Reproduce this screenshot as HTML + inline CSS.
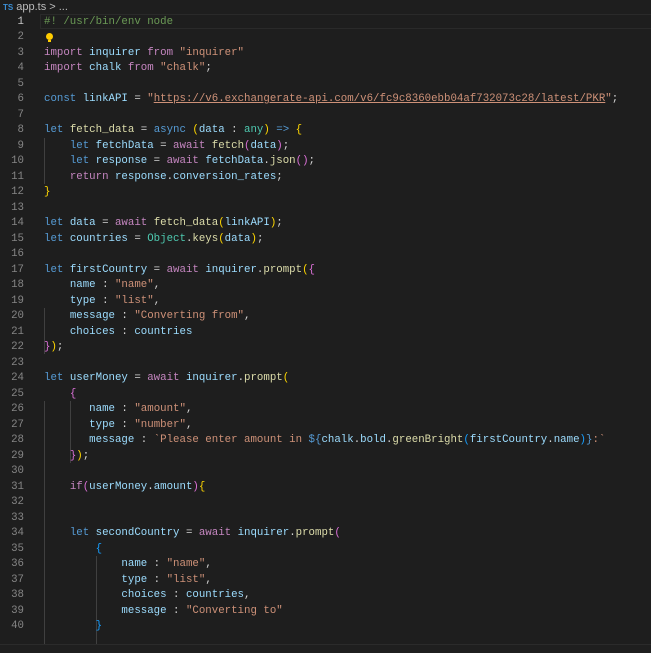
<!DOCTYPE html>
<html><head><meta charset="utf-8"><style>
html,body{margin:0;padding:0;background:#1e1e1e;width:651px;height:653px;overflow:hidden;position:relative}
.bc{position:absolute;left:3px;top:0;height:14px;font:11px "Liberation Sans",sans-serif;color:#bbbbbb;line-height:14px;white-space:pre}
.bc .ts{color:#3b8fd6;font-size:8px;font-weight:bold;margin-right:3px}
.cur{position:absolute;left:40px;right:0;top:14px;height:15px;border:1px solid #2a2a2a;border-right:none;box-sizing:border-box}
.ln{position:absolute;left:0;width:24px;top:14.5px;text-align:right;font:10.75px/15.5px "Liberation Mono",monospace;color:#858585;white-space:pre}
.code{position:absolute;left:44px;top:14.5px;font:10.75px/15.5px "Liberation Mono",monospace;color:#d4d4d4;white-space:pre}
.k{color:#569cd6}.c{color:#c586c0}.v{color:#9cdcfe}.f{color:#dcdcaa}.s{color:#ce9178}.m{color:#6a9955}.t{color:#4ec9b0}
.b1{color:#ffd700}.b2{color:#da70d6}.b3{color:#179fff}
.u{text-decoration:underline;text-decoration-color:#ce9178}
.g{position:absolute;width:1px;background:#404040}
.bot{position:absolute;left:0;right:0;top:644px;bottom:0;background:#1f1f1f;border-top:1px solid #2b2b2b}
.bulb{position:absolute;left:46px;top:33px;width:7px;height:7px;border-radius:50%;background:#ffcc00}
.bulb:after{content:"";position:absolute;left:2px;top:7px;width:3px;height:2px;background:#ffcc00}
</style></head><body>
<div class="bc"><span class="ts">TS</span>app.ts &gt; ...</div>
<div class="cur"></div>
<div class="g" style="left:44px;top:138px;height:46px"></div>
<div class="g" style="left:44px;top:308px;height:46px"></div>
<div class="g" style="left:44px;top:401px;height:243px"></div>
<div class="g" style="left:70px;top:401px;height:62px"></div>
<div class="g" style="left:96px;top:556px;height:88px"></div>
<div class="bulb"></div>
<div class="ln"><span style="color:#c6c6c6">1</span>
2
3
4
5
6
7
8
9
10
11
12
13
14
15
16
17
18
19
20
21
22
23
24
25
26
27
28
29
30
31
32
33
34
35
36
37
38
39
40</div>
<div class="code"><span class="m">#! /usr/bin/env node</span>

<span class="c">import</span> <span class="v">inquirer</span> <span class="c">from</span> <span class="s">"inquirer"</span>
<span class="c">import</span> <span class="v">chalk</span> <span class="c">from</span> <span class="s">"chalk"</span>;

<span class="k">const</span> <span class="v">linkAPI</span> = <span class="s">"<span class="u">https://v6.exchangerate-api.com/v6/fc9c8360ebb04af732073c28/latest/PKR</span>"</span>;

<span class="k">let</span> <span class="f">fetch_data</span> = <span class="k">async</span> <span class="b1">(</span><span class="v">data</span> : <span class="t">any</span><span class="b1">)</span> <span class="k">=&gt;</span> <span class="b1">{</span>
    <span class="k">let</span> <span class="v">fetchData</span> = <span class="c">await</span> <span class="f">fetch</span><span class="b2">(</span><span class="v">data</span><span class="b2">)</span>;
    <span class="k">let</span> <span class="v">response</span> = <span class="c">await</span> <span class="v">fetchData</span>.<span class="f">json</span><span class="b2">()</span>;
    <span class="c">return</span> <span class="v">response</span>.<span class="v">conversion_rates</span>;
<span class="b1">}</span>

<span class="k">let</span> <span class="v">data</span> = <span class="c">await</span> <span class="f">fetch_data</span><span class="b1">(</span><span class="v">linkAPI</span><span class="b1">)</span>;
<span class="k">let</span> <span class="v">countries</span> = <span class="t">Object</span>.<span class="f">keys</span><span class="b1">(</span><span class="v">data</span><span class="b1">)</span>;

<span class="k">let</span> <span class="v">firstCountry</span> = <span class="c">await</span> <span class="v">inquirer</span>.<span class="f">prompt</span><span class="b1">(</span><span class="b2">{</span>
    <span class="v">name</span> : <span class="s">"name"</span>,
    <span class="v">type</span> : <span class="s">"list"</span>,
    <span class="v">message</span> : <span class="s">"Converting from"</span>,
    <span class="v">choices</span> : <span class="v">countries</span>
<span class="b2">}</span><span class="b1">)</span>;

<span class="k">let</span> <span class="v">userMoney</span> = <span class="c">await</span> <span class="v">inquirer</span>.<span class="f">prompt</span><span class="b1">(</span>
    <span class="b2">{</span>
       <span class="v">name</span> : <span class="s">"amount"</span>,
       <span class="v">type</span> : <span class="s">"number"</span>,
       <span class="v">message</span> : <span class="s">`Please enter amount in </span><span class="k">${</span><span class="v">chalk</span>.<span class="v">bold</span>.<span class="f">greenBright</span><span class="b3">(</span><span class="v">firstCountry</span>.<span class="v">name</span><span class="b3">)</span><span class="k">}</span><span class="s">:`</span>
    <span class="b2">}</span><span class="b1">)</span>;

    <span class="c">if</span><span class="b2">(</span><span class="v">userMoney</span>.<span class="v">amount</span><span class="b2">)</span><span class="b1">{</span>


    <span class="k">let</span> <span class="v">secondCountry</span> = <span class="c">await</span> <span class="v">inquirer</span>.<span class="f">prompt</span><span class="b2">(</span>
        <span class="b3">{</span>
            <span class="v">name</span> : <span class="s">"name"</span>,
            <span class="v">type</span> : <span class="s">"list"</span>,
            <span class="v">choices</span> : <span class="v">countries</span>,
            <span class="v">message</span> : <span class="s">"Converting to"</span>
        <span class="b3">}</span></div>
<div class="bot"></div>
</body></html>
